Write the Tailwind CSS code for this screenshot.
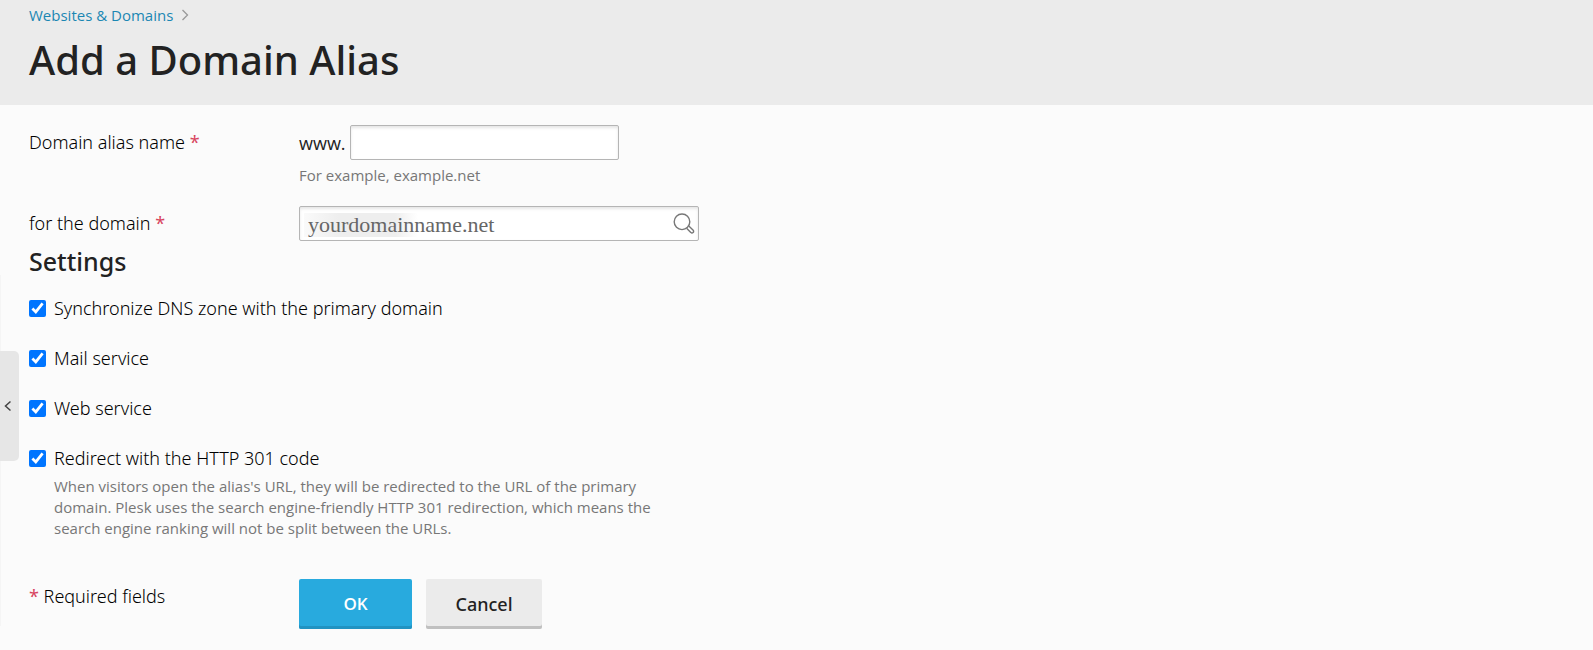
<!DOCTYPE html>
<html lang="en">

<head>
    <meta charset="UTF-8">
    <meta name="viewport" content="width=device-width, initial-scale=1.0">
    <title>Add a Domain Alias</title>
    <script src="https://cdn.jsdelivr.net/npm/@tailwindcss/browser@4"></script>
</head>

<body class="relative min-h-screen bg-[#fbfbfb] font-['Noto_Sans',sans-serif] text-[18px] leading-6 font-light text-black">

    <header class="bg-[#ebebeb] px-[29px] pt-[3px] pb-[18px]">
        <nav aria-label="Breadcrumb" class="flex items-center gap-2 font-['Open_Sans',sans-serif] text-[15px] leading-6 font-normal">
            <a href="#" class="text-[#1b87b3] hover:underline">Websites &amp; Domains</a>
            <svg class="h-3 w-2" viewBox="0 0 8 12" fill="none" stroke="#999" stroke-width="1.3" aria-hidden="true">
                <path d="M1.5 1 6.5 6l-5 5" />
            </svg>
        </nav>
        <h1 class="mt-[5px] text-[40px] leading-[55px] font-medium text-[#222]">Add a Domain Alias</h1>
    </header>

    <!-- Sidebar toggle -->
    <aside class="absolute top-[275px] bottom-6 left-0 border-l border-[#f5f5f5]">
        <button type="button" aria-label="Collapse sidebar" class="absolute top-[76px] -left-px flex h-[110px] w-[19px] items-center rounded-r-[5px] bg-[#e6e6e6] pl-1">
            <svg class="h-3 w-2" viewBox="0 0 8 12" fill="none" stroke="#444" stroke-width="1.5" aria-hidden="true">
                <path d="M6.5 1.5 1.5 6l5 4.5" />
            </svg>
        </button>
    </aside>

    <main class="px-[29px] pt-5 pb-5">
        <form onsubmit="return false">
            <div class="flex">
                <label for="alias" class="w-[270px] shrink-0 pt-[5px]">Domain alias name <span class="font-normal text-[#d8455f]">*</span></label>
                <div>
                    <div class="flex items-center gap-1">
                        <span class="font-['Open_Sans',sans-serif] font-normal text-[#222]">www.</span>
                        <input id="alias" type="text" class="h-[35px] w-[269px] rounded-[2px] border border-[#b5b5b5] bg-white px-2 shadow-[inset_0_2px_3px_rgba(0,0,0,0.1)]">
                    </div>
                    <p class="mt-[5px] font-['Open_Sans',sans-serif] text-[15px] leading-[21px] font-normal text-[#777]">For example, example.net</p>
                </div>
            </div>

            <div class="mt-5 flex">
                <label for="domain" class="w-[270px] shrink-0 pt-[5px]">for the domain <span class="font-normal text-[#d8455f]">*</span></label>
                <div class="relative w-[400px]">
                    <input id="domain" type="text" value="yourdomainname.net" class="h-[35px] w-full rounded-[2px] border border-[#b5b5b5] bg-white bg-[linear-gradient(to_right,#fafafa,#eee_30%,#eee_80%,#fff)] bg-[length:114px_24px] bg-[position:4px_6px] bg-no-repeat pt-[2px] pr-8 pl-2 font-['Liberation_Serif',serif] text-[22px] font-normal text-[#666] shadow-[inset_0_2px_3px_rgba(0,0,0,0.1)]">
                    <button type="button" aria-label="Search" class="absolute top-[7px] right-1">
                        <svg class="size-[22px]" viewBox="0 0 22 22" fill="none" stroke="#777" stroke-width="1.4">
                            <circle cx="9" cy="8.8" r="7.8" />
                            <path d="m13.6 15.2 4.2 4.2a1.6 1.6 0 0 0 2.4-2.2l-4.4-4.2" />
                        </svg>
                    </button>
                </div>
            </div>

            <h2 class="mt-[3px] text-[25px] leading-[34px] font-medium text-[#222]">Settings</h2>

            <div class="mt-[18px] flex flex-col gap-[26px]">
                <label class="flex items-center gap-2">
                    <input type="checkbox" checked class="size-[17px] accent-[#0075ff]">
                    Synchronize DNS zone with the primary domain
                </label>
                <label class="flex items-center gap-2">
                    <input type="checkbox" checked class="size-[17px] accent-[#0075ff]">
                    Mail service
                </label>
                <label class="flex items-center gap-2">
                    <input type="checkbox" checked class="size-[17px] accent-[#0075ff]">
                    Web service
                </label>
                <div>
                    <label class="flex items-center gap-2">
                        <input type="checkbox" checked aria-describedby="redirect-hint" class="size-[17px] accent-[#0075ff]">
                        Redirect with the HTTP 301 code
                    </label>
                    <p id="redirect-hint" class="mt-[6px] ml-[25px] max-w-[610px] font-['Open_Sans',sans-serif] text-[15px] leading-[21px] font-normal text-[#777]">When visitors open the alias's URL, they will be redirected to the URL of the primary domain. Plesk uses the search engine-friendly HTTP 301 redirection, which means the search engine ranking will not be split between the URLs.</p>
                </div>
            </div>

            <div class="mt-10 flex">
                <p class="w-[270px] shrink-0 pt-[5px]"><span class="font-normal text-[#d8455f]">*</span> Required fields</p>
                <div class="flex gap-[14px]">
                    <button type="submit" class="h-[50px] w-[113px] rounded-[2px] bg-[#28aade] font-['Open_Sans',sans-serif] text-[17px] font-semibold text-white shadow-[inset_0_-3px_0_#2193c2]">OK</button>
                    <button type="button" class="h-[50px] w-[116px] rounded-[2px] bg-[#ebebeb] text-[18px] font-medium text-[#222] shadow-[inset_0_-3px_0_#c0c0c0]">Cancel</button>
                </div>
            </div>
        </form>
    </main>

</body>

</html>
